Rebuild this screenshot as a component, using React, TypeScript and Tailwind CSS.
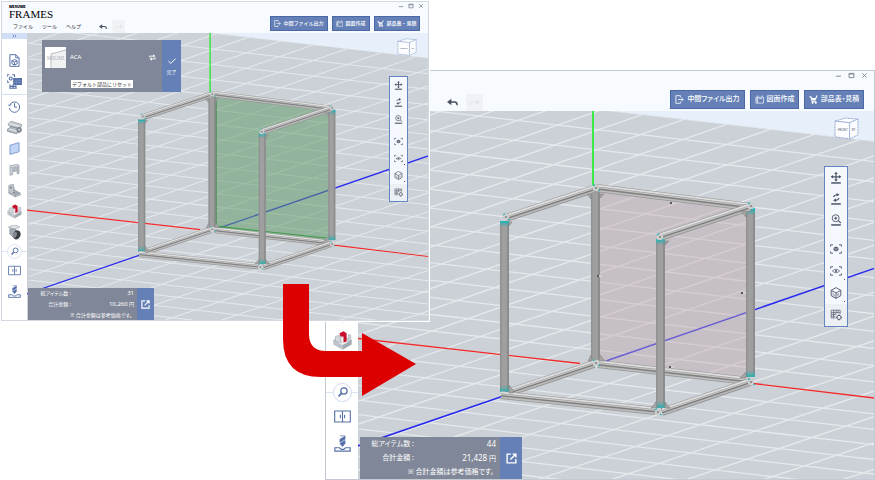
import React from 'react';
import clsx from 'clsx';

type Point = [number, number];

const RED_SLOPE = 0.115;
const FLOOR = '358,82 358,520 890,520 890,143 340,79.6';

// Floor grid, every line is given by its height at x = 874
const rows = Array.from({ length: 30 }, (_, k) => 141 + 20.7 * k - 0.167 * k * k);
const cols = Array.from({ length: 30 }, (_, n) => {
  const i = n - 18;
  return { y: 268.5 + 23.5 * i + 0.2 * i * i, slope: 0.347 - (i > 0 ? 0.002 * i : 0) };
});

const Beam = ({ from, to }: { from: Point; to: Point }) => {
  const line = (dy: number, color: string, width: number) => (
    <line x1={from[0]} y1={from[1] + dy} x2={to[0]} y2={to[1] + dy} stroke={color} strokeWidth={width} />
  );
  return (
    <g>
      {line(0, '#979797', 8)}
      {line(-2.6, '#dedede', 1.8)}
      {line(-0.6, '#c2c2c2', 1.4)}
      {line(0.8, '#7c7c7c', 1.1)}
      {line(2.4, '#bdbdbd', 1.5)}
    </g>
  );
};

const Post = ({ x, top, bottom, caps = true }: { x: number; top: number; bottom: number; caps?: boolean }) => (
  <g>
    <rect x={x} y={top} width="9" height={bottom - top} fill="#9f9f9f" />
    <rect x={x} y={top} width="1.5" height={bottom - top} fill="#919191" />
    <rect x={x + 7} y={top} width="2" height={bottom - top} fill="#8c8c8c" />
    {caps && (
      <g fill="#2fb0b0">
        <rect x={x} y={top} width="9" height="2.5" />
        <rect x={x} y={top + 2.5} width="9" height="2.5" opacity="0.4" />
        <rect x={x} y={bottom - 3} width="9" height="3" opacity="0.8" />
        <rect x={x} y={bottom - 6} width="9" height="3" opacity="0.3" />
      </g>
    )}
  </g>
);

const Joint = ({ x, y }: { x: number; y: number }) => (
  <g>
    <rect x={x - 3} y={y - 3} width="6" height="6" rx="1.5" fill="#cdcdcd" />
    <circle cx={x} cy={y} r="1.1" fill="#858585" />
    <path d={`M${x - 3} ${y - 2}l2 -1.5M${x + 2} ${y + 2}l2 1`} stroke="#35b5b5" strokeWidth="1.2" />
  </g>
);

const Scene = ({ panel, viewBox }: { panel: 'green' | 'pink'; viewBox: string }) => (
  <svg className="absolute inset-0 size-full" viewBox={viewBox} preserveAspectRatio="xMinYMin slice" aria-hidden="true">
    <defs>
      <clipPath id={`floor-${panel}`}>
        <polygon points={FLOOR} />
      </clipPath>
    </defs>
    <rect x="340" y="90" width="560" height="420" fill="#e6effa" />
    <polygon points="340,79.6 890,143 890,520 340,520" fill="#cbd1d7" />
    <g clipPath={`url(#floor-${panel})`} stroke="#e5e9ec" strokeWidth="1.3">
      {rows.map((y) => (
        <line key={y} x1="340" y1={y - 534 * RED_SLOPE} x2="890" y2={y + 16 * RED_SLOPE} />
      ))}
      {cols.map(({ y, slope }) => (
        <line key={y} x1="340" y1={y + 534 * slope} x2="890" y2={y - 16 * slope} />
      ))}
    </g>

    {/* axes */}
    <path d="M340 336.5L580 363.5M753 383.5L890 400" stroke="#f02a2a" strokeWidth="1.4" />
    <path d="M340 452L502 396.5M606 361L890 263" stroke="#2a2aec" strokeWidth="1.6" />
    <path d="M593 100V185" stroke="#2ee83a" strokeWidth="1.8" />

    {/* plate */}
    {panel === 'green' ? (
      <g>
        <polygon points="597,190 748,208 748,378 597,362" fill="#5d9a66" fillOpacity="0.52" />
        <path d="M600 192V359L748 375" fill="none" stroke="#3f9a45" strokeWidth="1.4" />
        <path d="M600 194V358" stroke="#3b7a42" strokeWidth="2.6" />
      </g>
    ) : (
      <polygon points="597,190 748,208 748,378 597,362" fill="#c0a8ad" fillOpacity="0.42" />
    )}

    <Post x={591} top={190} bottom={360} caps={false} />
    <Post x={746} top={209} bottom={377} />
    <Beam from={[596, 188]} to={[750, 207]} />
    <Beam from={[598, 364]} to={[748, 381]} />
    <Beam from={[506, 218]} to={[594, 189]} />
    <Beam from={[507, 393]} to={[594, 364]} />
    <Post x={500} top={221} bottom={392} />
    <Beam from={[501, 395]} to={[656, 411]} />
    <Beam from={[662, 412]} to={[750, 382]} />
    <Post x={656} top={239} bottom={408} />
    <Beam from={[660, 237]} to={[750, 207]} />

    {/* brackets */}
    <g fill="#a5a5a5" stroke="#848484" strokeWidth="0.6">
      <path d="M509 385l4 5v3h-4zM656 402l-5 6h6zM665 402l5 6h-5zM746 372l-6 6h6zM591 355l-3 6h4zM600 355l5 6h-6zM665 241h4l-4 4zM509 222h3l-3 4zM591 194h-4l4 5zM600 194h4l-4 4zM746 211h-5l5 6z" />
    </g>
    <Joint x={506} y={217} />
    <Joint x={596} y={188} />
    <Joint x={751} y={206} />
    <Joint x={660} y={237} />
    <Joint x={596} y={363} />
    <Joint x={751} y={382} />
    <Joint x={658} y={412} />

    {panel === 'pink' && (
      <g>
        {[[672, 203], [599, 276], [743, 293], [671, 367]].map(([x, y]) => (
          <g key={x + y}>
            <rect x={x - 2} y={y - 1} width="2" height="2" fill="#555" />
            <rect x={x} y={y - 1} width="3" height="2" fill="#d2d2d2" />
          </g>
        ))}
      </g>
    )}
  </svg>
);

/* ---------- icons ---------- */

const Icon = ({ children, className }: { children: React.ReactNode; className?: string }) => (
  <svg viewBox="0 0 20 20" fill="none" stroke="currentColor" strokeWidth="1.5" className={clsx('size-full', className)} aria-hidden="true">
    {children}
  </svg>
);

const sideIcons: { label: string; icon: React.ReactNode }[] = [
  {
    label: '新規',
    icon: <Icon><path d="M3 1h9l5 5v13H3zM12 1v5h5" /><path d="M10 8.500l4 2v4.500l-4 2-4-2v-4.500zM6 10.500l4 2 4-2M10 12.500V17" /></Icon>,
  },
  {
    label: 'フレーム',
    icon: (
      <Icon className="scale-115">
        <path d="M0 4V1h3M7 1h3v3M0 8v3h3" />
        <circle cx="5" cy="6" r="2" />
        <path d="M9 6h11v8H9z" fill="currentColor" />
        <path d="M9 9h11M9 11.500h11M12.500 6v8M16 6v8" stroke="#8fa6d2" strokeWidth=".5" />
        <path d="M4 14v5M8 14v5M12 15v4M4 16.500h8M3 19h10" />
      </Icon>
    ),
  },
  {
    label: '履歴',
    icon: <Icon><path d="M3 7a8 8 0 1 1-1 5" /><path d="M.5 7.500l2.500 1.500 2-3" /><path d="M10 5v6h4" /></Icon>,
  },
  {
    label: 'アルミフレーム',
    icon: (
      <Icon className="scale-120">
        <path d="M2 5l4-3 13 4v3l-3 2-14-4z" fill="#c3c8ce" stroke="#878f98" strokeWidth=".8" />
        <path d="M4 8l12 3v3L4 10z" fill="#8d959e" stroke="none" />
        <path d="M1 12l5-3 12 3v3l-6 3-11-3z" fill="#b3bac1" stroke="#7c848e" strokeWidth=".8" />
        <path d="M3 4.800l13 4M3 12l10 3" stroke="#f3f4f6" strokeWidth="1.200" />
        <circle cx="16" cy="13" r="3" fill="#8c949d" stroke="#666e78" strokeWidth=".8" />
        <circle cx="16" cy="13" r="1" fill="#eee" stroke="none" />
      </Icon>
    ),
  },
  { label: 'パネル', icon: <Icon><path d="M3 5l14-4v14L3 19z" fill="#c3d5f6" stroke="#7f9ad0" /></Icon> },
  {
    label: 'ブラケット板',
    icon: <Icon><path d="M3 4l12-2 2 2v12l-3 1v-5l-7 2v4l-4 1z" fill="#b1b8bf" stroke="#8f979f" strokeWidth=".8" /><path d="M4 5.500l11-2M5 8v9" stroke="#e0e3e6" /></Icon>,
  },
  {
    label: 'ブラケット',
    icon: (
      <Icon className="scale-110">
        <path d="M2 3l6-2 2 8 8 5 1 2-8 3L2 14z" fill="#c0c6cc" stroke="#868e97" strokeWidth=".8" />
        <path d="M8 2v9l4 5 6-2-8-5z" fill="#a2aab2" stroke="none" />
        <path d="M2 13l9 3 7-3M11 16v3" stroke="#868e97" strokeWidth=".8" />
        <circle cx="5" cy="6" r="1.100" fill="#59616b" stroke="none" /><circle cx="9" cy="13" r="1" fill="#59616b" stroke="none" />
      </Icon>
    ),
  },
  {
    label: 'アクセサリ',
    icon: (
      <Icon className="scale-120">
        <path d="M1 10l9-4 9 4-9 5z" fill="#eceef0" stroke="#9ba3ab" strokeWidth=".7" />
        <path d="M1 10v4l9 5v-4z" fill="#bcc3ca" stroke="none" /><path d="M19 10v4l-9 5v-4z" fill="#a0a8b0" stroke="none" />
        <path d="M7 3l4-2 3 2v8l-3 1V6L8 6z" fill="#c8102e" stroke="none" />
        <path d="M3 6l4-1 2 7-6-1zM16 4l2 1v5l-3 1z" fill="#d5d9dd" stroke="#9ba3ab" strokeWidth=".6" />
      </Icon>
    ),
  },
  {
    label: 'キャスタ',
    icon: (
      <Icon className="scale-120">
        <path d="M2 3l8-3 7 3-7 3z" fill="#dde0e4" stroke="#949ca4" strokeWidth=".7" />
        <path d="M4 5l8 1v6l-4 4-4-4z" fill="#a4acb4" stroke="#737b84" strokeWidth=".7" />
        <ellipse cx="13" cy="13" rx="4.800" ry="6" transform="rotate(20 13 13)" fill="#3b3f45" stroke="none" />
        <ellipse cx="10.500" cy="13" rx="2.400" ry="4" transform="rotate(20 10.500 13)" fill="#85898f" stroke="none" />
      </Icon>
    ),
  },
  {
    label: '検索',
    icon: (
      <Icon className="scale-115">
        <circle cx="10" cy="10" r="9.300" fill="#fff" stroke="#cfdaf0" strokeWidth="1" />
        <circle cx="11.500" cy="8.500" r="3.200" strokeWidth="1.300" /><path d="M9 11L6 14" strokeWidth="1.800" />
      </Icon>
    ),
  },
  { label: '配置', icon: <Icon><path d="M0.800 3.500h18.400v13H.8zM10 3.500v13M7.500 8v4M12.500 8v4" strokeWidth="1.300" /></Icon> },
  {
    label: '加工',
    icon: <Icon><path d="M1 15h5.500l2 2h3l2-2H19v4H1z" strokeWidth="1.400" /><path d="M7 1h6M7 5l6-3.500V5L7 8.500zM7 10l6-3.500V10l-3 3.500z" fill="currentColor" strokeWidth=".8" /></Icon>,
  },
];

const floorMark = <path d="M2 17h16v2.500H2z" fill="currentColor" stroke="none" />;
const corners = <path d="M1 6V3h4M15 3h4v3M19 14v3h-4M5 17H1v-3" />;

const viewIcons: { label: string; icon: React.ReactNode; more?: boolean }[] = [
  { label: '移動', icon: <Icon><path d="M10 1v14M3 8h14" strokeWidth="2" /><path d="M10 0l3 3.500H7zM10 16l3-3.500H7zM1 8l4-3v6zM19 8l-4-3v6z" fill="currentColor" stroke="none" />{floorMark}</Icon> },
  { label: '回転', icon: <Icon><path d="M6 7q1-4 6-4M15 8q-1 4-6 4" strokeWidth="1.800" /><path d="M11 0l5 3-5 3zM10 9v6l-5-3z" fill="currentColor" stroke="none" />{floorMark}</Icon> },
  { label: '拡大縮小', icon: <Icon><circle cx="9.500" cy="7" r="5.800" /><path d="M14 11l4 4M7 7h5M9.500 4.500v5" strokeWidth="1.800" />{floorMark}</Icon> },
  { label: '全体表示', icon: <Icon>{corners}<path d="M10 6l4 2v4l-4 2-4-2V8z" fill="currentColor" stroke="none" /><path d="M7 8.500l3 1.500 3-1.500M10 10v3" stroke="#fff" strokeWidth=".8" /></Icon> },
  { label: '表示切替', more: true, icon: <Icon>{corners}<path d="M4 10q6-6 12 0q-6 6-12 0z" strokeWidth="1.200" /><circle cx="10" cy="10" r="1.800" fill="currentColor" stroke="none" /></Icon> },
  { label: '視点', more: true, icon: <Icon><path d="M10 1l8 4.500v9L10 19l-8-4.500v-9zM2 5.500l8 4.500 8-4.500M10 10v9" /><path d="M4 9l4 6M4 12l3 4M12 12l4 2M12 15l3-5" strokeWidth=".8" /></Icon> },
  { label: 'グリッド設定', icon: <Icon><path d="M9 15H2V2h15v6M2 6h15M2 9h8M2 12h7M6 2v13M10 2v7M13.500 2v5" strokeWidth="1.100" /><circle cx="15" cy="14" r="3.500" strokeWidth="1.600" /><path d="M15 9v2M15 17v2M10 14h2M18 14h2" /></Icon> },
];

const exportIcon = <Icon><path d="M12 5V1.500H2v17h10V15M7 10h11M14 6l4.500 4-4.500 4" strokeWidth="1.800" /></Icon>;
const drawingIcon = <Icon><path d="M2 5h17v13H2zM6 1v17M2 9h4M2 13h4M9 8h7M16 1v4" strokeWidth="1.500" /></Icon>;
const cartIcon = <Icon><path d="M1 4h3l3 10h9M5 6l9 5M18 1l-4 9-6 1M6 8h8" strokeWidth="2.400" /><circle cx="8" cy="17" r="1.800" fill="currentColor" /><circle cx="15" cy="17" r="1.800" fill="currentColor" /></Icon>;

/* ---------- window parts ---------- */

const Header = ({ large }: { large?: boolean }) => {
  const actions = [
    { label: '中間ファイル出力', icon: exportIcon, width: large ? 'w-[75px]' : 'w-[58px]' },
    { label: '図面作成', icon: drawingIcon, width: large ? 'w-[49px]' : 'w-[38px]' },
    { label: '部品表・見積', icon: cartIcon, width: large ? 'w-[60px]' : 'w-[46px]' },
  ];

  return (
    <header className={clsx('flex shrink-0 justify-between bg-[#f7faff]', large ? 'h-10' : 'h-[31px]')}>
      <div className={clsx('flex flex-col text-black', large ? 'pt-[3px] pl-[9px]' : 'pt-[2px] pl-[7px]')}>
        <span className={clsx('font-black', large ? 'text-[5px] leading-[6px]' : 'text-[4px] leading-[5px]')}>MISUMI</span>
        <span className={clsx("font-['Liberation_Serif',serif]", large ? 'text-[14px] leading-[14px]' : 'text-[11px] leading-[11px]')}>FRAMES</span>
        <nav className={clsx('flex items-center text-[#333]', large ? 'h-[17px] gap-[9px] pl-1 text-[7px]' : 'h-[13px] gap-[9px] pl-1 text-[5px]')}>
          <button>ファイル</button>
          <button>ツール</button>
          <button>ヘルプ</button>
          <div className={clsx('flex items-center', large ? 'ml-2 gap-[5px]' : 'ml-[6px] gap-[3px]')}>
            <button aria-label="元に戻す" className={clsx('flex items-center justify-center text-[#4a5264]', large ? 'size-[17px]' : 'size-[13px]')}>
              <span className={large ? 'size-[11px]' : 'size-2'}>
                <Icon><path d="M5 9h9q4.500 0 4.500 6" strokeWidth="2.600" /><path d="M0 9l8-6v12z" fill="currentColor" stroke="none" /></Icon>
              </span>
            </button>
            <button aria-label="やり直す" className={clsx('flex items-center justify-center bg-[#f0f2f5] text-[#e2e5e9]', large ? 'size-[17px]' : 'size-[13px]')}>
              <span className={large ? 'size-[11px]' : 'size-2'}>
                <Icon><path d="M15 9H6q-4.500 0-4.500 6" strokeWidth="2" /><path d="M20 9l-7-5v10z" fill="currentColor" stroke="none" /></Icon>
              </span>
            </button>
          </div>
        </nav>
      </div>

      <div className={clsx('flex flex-col items-end justify-between', large ? 'pb-[2px] pr-[10px]' : 'pb-[2px] pr-2')}>
        <div className={clsx('flex text-[#777e8a]', large ? '-mr-1 gap-[6px] pt-[1px]' : '-mr-1 gap-1 pt-[1px]')}>
          {[
            { label: '最小化', d: 'M3 12h14' },
            { label: '最大化', d: 'M3 4h14v12H3zM3 6h14' },
            { label: '閉じる', d: 'M4 4l12 12M16 4L4 16' },
          ].map((c) => (
            <button key={c.label} aria-label={c.label} className={large ? 'size-[7px]' : 'size-[6px]'}>
              <Icon><path d={c.d} strokeWidth="2.500" /></Icon>
            </button>
          ))}
        </div>
        <div className={clsx('flex', large ? 'gap-[5px]' : 'gap-1')}>
          {actions.map((a) => (
            <button
              key={a.label}
              className={clsx(
                'flex items-center justify-center whitespace-nowrap border border-[#4a68a6] bg-[#6480b6] font-medium text-white',
                a.width,
                large ? "h-[19px] gap-[3px] text-[7px] [font-feature-settings:'palt']" : 'h-[15px] gap-[2px] text-[5px]'
              )}
            >
              <span className={clsx('shrink-0', large ? 'size-[9px]' : 'size-[7px]')}>{a.icon}</span>
              {a.label}
            </button>
          ))}
        </div>
      </div>
    </header>
  );
};

const Sidebar = ({ large }: { large?: boolean }) => (
  <aside className={clsx('flex shrink-0 flex-col bg-white text-[#5570a8]', large ? 'w-8' : 'w-[25px]')}>
    <button aria-label="展開" className={clsx('flex shrink-0 items-center justify-center bg-[#d0dff6]', large ? 'h-2' : 'h-[6px]')}>
      <svg viewBox="0 0 8 6" className={large ? 'h-[5px]' : 'h-1'} fill="none" stroke="currentColor" aria-hidden="true">
        <path d="M1 1l2 2-2 2M4 1l2 2-2 2" />
      </svg>
    </button>
    <ul className={clsx('flex flex-col', large ? 'pt-[14px]' : 'pt-[11px]')}>
      {sideIcons.map(({ label, icon }, i) => {
        const isSearch = label === '検索';
        return (
          <li
            key={label}
            className={clsx(
              'flex items-center justify-center',
              i === 2 && (large ? 'mt-[5px]' : 'mt-1'),
              isSearch ? (large ? 'h-[22px]' : 'h-[17px]') : large ? 'h-[27px]' : 'h-[21px]',
              i === 1 && 'shadow-[0_2px_0_#fff,0_3px_0_#d5e1f3]'
            )}
          >
            {isSearch && <span className="h-px flex-1 bg-[#dbe4f4]" />}
            <button aria-label={label} className={large ? 'size-[17px]' : 'size-[13px]'}>{icon}</button>
            {isSearch && <span className="h-px flex-1 bg-[#dbe4f4]" />}
          </li>
        );
      })}
    </ul>
  </aside>
);

const ViewTools = ({ large }: { large?: boolean }) => (
  <div
    className={clsx(
      'absolute flex flex-col border border-[#6484c2] bg-[#f5f9ff] text-[#4d5566]',
      large ? 'top-[55px] right-[26px] w-6' : 'top-[43px] right-5 w-[19px]'
    )}
  >
    {viewIcons.map(({ label, icon, more }, i) => (
      <button
        key={label}
        aria-label={label}
        className={clsx(
          'relative flex items-center justify-center',
          large ? (i < 3 ? 'h-[21px]' : 'h-[22px]') : 'h-[17px]',
          i === 3 && (large ? 'mt-2' : 'mt-[5px]'),
          i === 6 && 'bg-[#eceff3]'
        )}
      >
        <span className={large ? 'size-3' : 'size-[9px]'}>{icon}</span>
        {more && <span className="absolute right-[2px] bottom-[2px] size-px bg-[#4d5566]" />}
      </button>
    ))}
  </div>
);

const ViewCube = ({ large }: { large?: boolean }) => (
  <svg
    viewBox="0 0 24 22"
    className={clsx('absolute', large ? 'top-[6px] right-[15px] w-[25px]' : 'top-[5px] right-[11px] w-[20px]')}
    aria-hidden="true"
  >
    <g fill="#fdfdff" stroke="#8ba3cf" strokeWidth=".8" strokeDasharray="2 .6">
      <path d="M1 4l10-3 12 1-8 3.500z" />
      <path d="M1 4l14 1.500V21L1 19z" />
      <path d="M15 5.500L23 2v15l-8 4z" />
    </g>
    <text x="3.500" y="13" fontSize="3" fill="#555c6b">FRONT</text>
    <text x="17" y="13" fontSize="3" fill="#555c6b">RT</text>
  </svg>
);

const Summary = ({ large, count, total }: { large?: boolean; count: string; total: string }) => (
  <div className={clsx('absolute bottom-0 flex text-white', large ? 'left-[2px] h-[42px] w-[162px]' : 'left-px h-8 w-[126px]')}>
    <dl
      className={clsx(
        "grid flex-1 grid-cols-2 items-center bg-[#7f8798] [font-feature-settings:'palt']",
        large ? 'auto-rows-[14px] pr-1 text-[7px] leading-[14px]' : 'auto-rows-[11px] pr-[3px] text-[5px] leading-[11px]'
      )}
    >
      <dt className={clsx('text-right', large ? 'pr-[14px]' : 'pr-[10px]')}>総アイテム数 :</dt>
      <dd className={clsx('text-right', large ? 'text-[8px]' : 'text-[6px]')}>{count}</dd>
      <dt className={clsx('text-right', large ? 'pr-[14px]' : 'pr-[10px]')}>合計金額 :</dt>
      <dd className="text-right">
        <span className={large ? 'text-[8px]' : 'text-[6px]'}>{total}</span> 円
      </dd>
      <dd className="col-span-2 pr-[2px] text-right">※ 合計金額は参考価格です。</dd>
    </dl>
    <button aria-label="詳細を開く" className={clsx('flex items-center justify-center bg-[#6480b6]', large ? 'w-[22px]' : 'w-[17px]')}>
      <span className={large ? 'size-[11px]' : 'size-[9px]'}>
        <Icon><path d="M9 2H2v16h16v-7M12 2h6v6M18 2L8 12" strokeWidth="2.500" /></Icon>
      </span>
    </button>
  </div>
);

const PartCard = () => (
  <div className="absolute top-[7px] left-[15px] flex h-[52px] w-[139px] text-white">
    <div className="flex flex-1 flex-col justify-between bg-[#7f8798] pt-[7px] pr-[6px] pb-1 pl-[3px]">
      <div className="flex items-start gap-1">
        <span className="flex size-[21px] shrink-0 items-center bg-white">
          <svg viewBox="0 0 21 21" className="size-full" aria-hidden="true">
            <path d="M6 7l15-4v18H7z" fill="#f0f1f3" />
            <path d="M6 21V7l15-4" fill="none" stroke="#a9adb5" strokeWidth=".8" />
            <text x="2" y="12.500" fontSize="4.500" fill="#a9adb6">MISUMI</text>
          </svg>
        </span>
        <span className="flex-1 text-[6px] leading-[21px]">ACA</span>
        <button aria-label="リセット" className="mt-[7px] size-[7px]">
          <Icon><path d="M2 10V6h11M18 10v4H7" strokeWidth="2.500" /><path d="M12 1l6 5-6 5zM8 9v10l-6-5z" fill="currentColor" stroke="none" /></Icon>
        </button>
      </div>
      <span className="ml-[26px] self-start bg-white px-px text-[5px] leading-[8px] text-[#333]">デフォルト部品にリセット</span>
    </div>
    <button className="flex w-[19px] flex-col items-center justify-center gap-1 bg-[#6480b6] text-[5px] leading-[6px]">
      <span className="size-2">
        <Icon><path d="M1 10l6 6L19 4" strokeWidth="2.500" /></Icon>
      </span>
      完了
    </button>
  </div>
);

const App = () => (
  <div className="relative min-h-screen overflow-hidden bg-white font-['Noto_Sans','Noto_Sans_CJK_JP',sans-serif]">
    {/* After */}
    <section className="absolute top-[70px] right-0 left-[325px] flex h-[410px] flex-col border border-[#c3cad4]">
      <Header large />
      <div className="flex min-h-0 flex-1">
        <Sidebar large />
        <main className="relative flex-1 overflow-hidden">
          <Scene panel="pink" viewBox="358 111 516 368" />
          <ViewCube large />
          <ViewTools large />
          <Summary large count="44" total="21,428" />
        </main>
      </div>
    </section>

    {/* Before */}
    <section className="absolute top-px right-[446px] left-px flex h-[320px] flex-col border border-[#d3d9e0] outline outline-white">
      <Header />
      <div className="flex min-h-0 flex-1">
        <Sidebar />
        <main className="relative flex-1 overflow-hidden">
          <Scene panel="green" viewBox="356 109 519 372" />
          <PartCard />
          <ViewCube />
          <ViewTools />
          <Summary count="31" total="10,260" />
        </main>
      </div>
    </section>

    <svg viewBox="0 0 134 114" className="absolute top-[284px] left-[283px] w-[134px]" aria-hidden="true">
      <path d="M0 0h26v50q0 17 17 17h36V49l54 31-54 32V93H38Q0 93 0 55z" fill="#dc0000" />
    </svg>
  </div>
);

export default App;
